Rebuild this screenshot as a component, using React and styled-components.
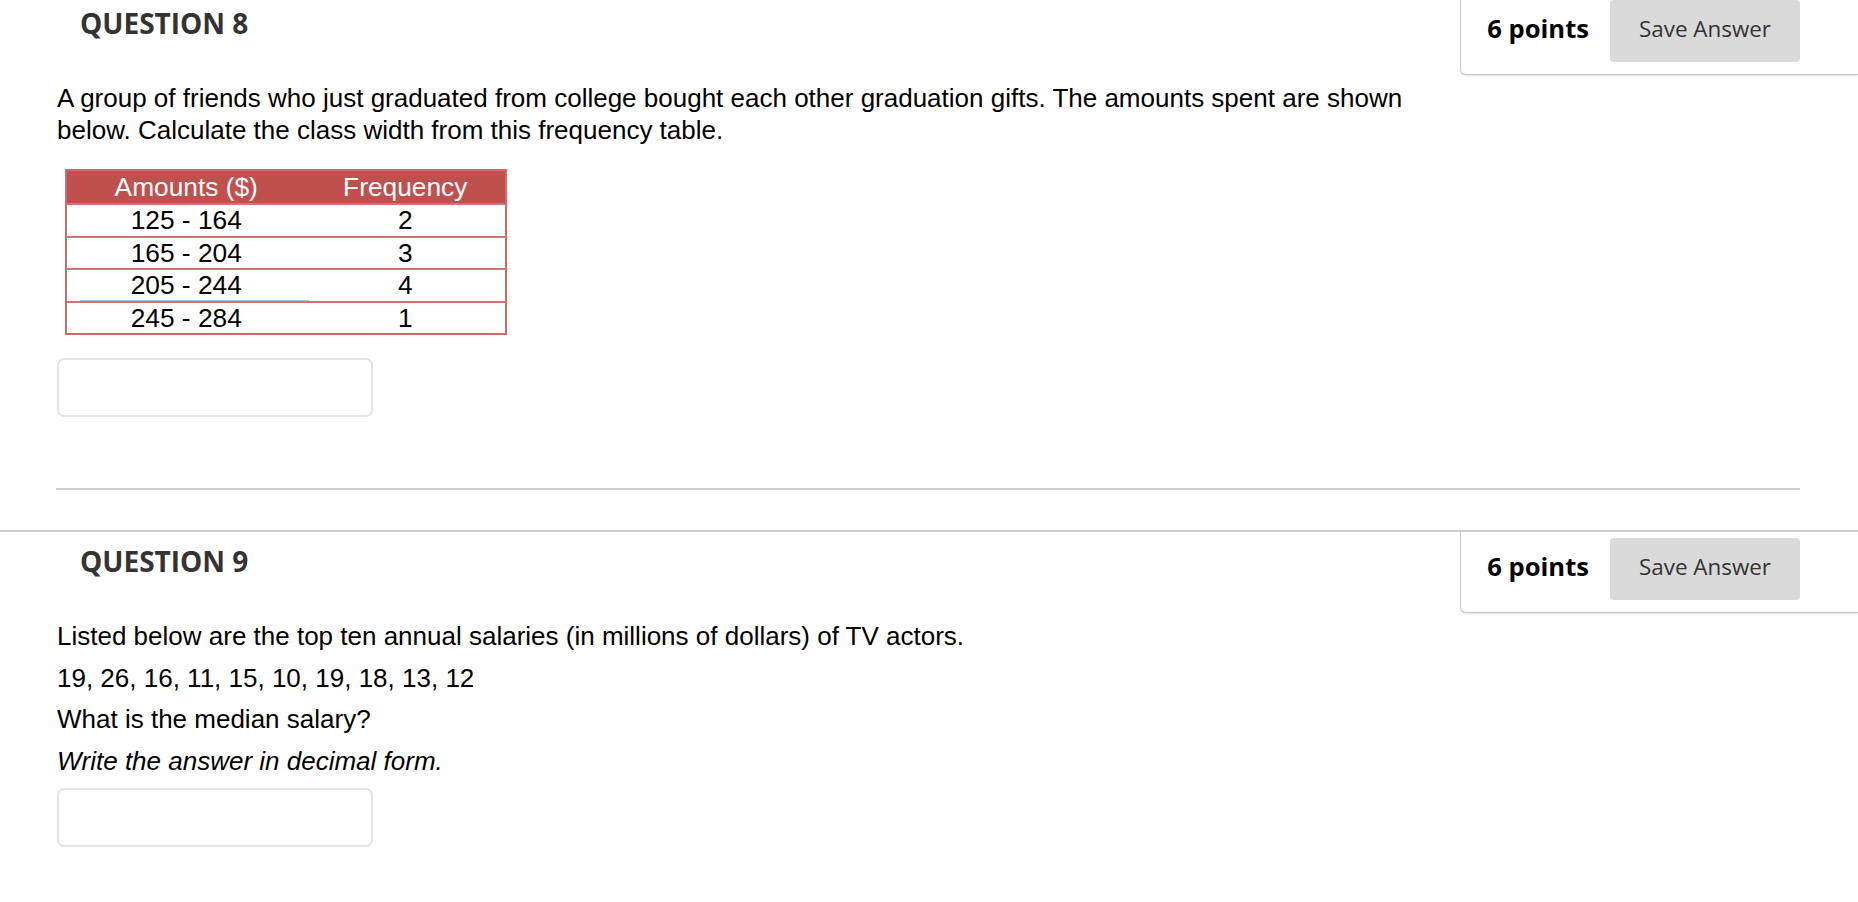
import React from 'react';
import styled, { createGlobalStyle } from 'styled-components';

const GlobalStyle = createGlobalStyle`
  body {
    margin: 0;
    background: #fff;
  }
`;

const Page = styled.div`
  margin-top: -8px;
  font-family: 'Liberation Sans', Arial, Helvetica, sans-serif;
  color: #000;
`;

const Question = styled.section`
  border-top: 2px solid #cdcdcd;
  padding-bottom: 40px;
`;

const Header = styled.div`
  display: flex;
  justify-content: space-between;
  align-items: flex-start;
`;

const Title = styled.h3`
  margin: 10px 0 0 80px;
  font-family: 'Open Sans', sans-serif;
  font-weight: 700;
  font-size: 28px;
  line-height: normal;
  color: #333;
`;

const PointsBox = styled.div`
  display: flex;
  align-items: center;
  gap: 21px;
  padding: 6px 58px 12px 26px;
  background: #fff;
  border-left: 1px solid #cfcfcf;
  border-bottom: 1px solid #c6c6c6;
  border-bottom-left-radius: 6px;
  box-shadow: 0 1px 2px rgba(0, 0, 0, 0.12);
`;

const Points = styled.span`
  margin-bottom: 6px;
  font-family: 'Open Sans', sans-serif;
  font-weight: 700;
  font-size: 25.6px;
  color: #000;
`;

const SaveButton = styled.button`
  width: 190px;
  height: 62px;
  padding: 0 0 5px;
  border: none;
  border-radius: 4px;
  background: #dadada;
  color: #333;
  font-family: 'Open Sans', sans-serif;
  font-size: 22.4px;
  cursor: pointer;
`;

const Body = styled.div`
  padding: 7px 58px 0 57px;
`;

const Prompt = styled.p`
  margin: 0 0 ${(p) => (p.$spaced ? '9.5px' : '0')};
  max-width: 1400px;
  font-size: 26px;
  line-height: 32px;
  font-style: ${(p) => (p.$italic ? 'italic' : 'normal')};
`;

const FreqTable = styled.table`
  margin: 23px 0 0 8px;
  width: 442px;
  border-collapse: separate;
  border-spacing: 0;
  border: 2px solid #cc6b68;
  font-family: 'Liberation Sans', Arial, sans-serif;
  font-size: 26.3px;
`;

const HeadCell = styled.th`
  height: 32px;
  padding: 0;
  background: #c0504d;
  color: #fff;
  font-weight: 400;
  text-align: center;
  width: ${(p) => p.$w}px;
`;

const Cell = styled.td`
  position: relative;
  height: 30.5px;
  padding: 0;
  border-top: 2px solid #d07471;
  text-align: center;
  line-height: 1;

  &::after {
    content: '';
    display: ${(p) => (p.$mark ? 'block' : 'none')};
    position: absolute;
    left: 13px;
    bottom: 0;
    width: 229px;
    height: 1px;
    background: #adc3e3;
  }
`;

const AnswerBox = styled.input`
  display: block;
  box-sizing: border-box;
  width: 316px;
  height: 59px;
  margin-top: ${(p) => p.$top}px;
  border: 2px solid #e4e4e4;
  border-radius: 7px;
  background: #fff;
  outline: none;
`;

const Divider = styled.div`
  height: 2px;
  margin: 71px 58px 0 56px;
  background: #cdcdcd;
`;

const rows = [
  ['125 - 164', '2'],
  ['165 - 204', '3'],
  ['205 - 244', '4'],
  ['245 - 284', '1'],
];

const QuestionHeader = ({ number }) => (
  <Header>
    <Title>QUESTION {number}</Title>
    <PointsBox>
      <Points>6 points</Points>
      <SaveButton>Save Answer</SaveButton>
    </PointsBox>
  </Header>
);

const App = () => {
  return (
    <Page>
      <GlobalStyle />
      <Question>
        <QuestionHeader number={8} />
        <Body>
          <Prompt>
            A group of friends who just graduated from college bought each other graduation gifts. The amounts spent are
            shown below. Calculate the class width from this frequency table.
          </Prompt>
          <FreqTable>
            <thead>
              <tr>
                <HeadCell $w={241}>Amounts ($)</HeadCell>
                <HeadCell $w={201}>Frequency</HeadCell>
              </tr>
            </thead>
            <tbody>
              {rows.map(([range, freq], i) => (
                <tr key={range}>
                  <Cell $mark={i === 2}>{range}</Cell>
                  <Cell>{freq}</Cell>
                </tr>
              ))}
            </tbody>
          </FreqTable>
          <AnswerBox type="text" $top={23} />
        </Body>
        <Divider />
      </Question>
      <Question>
        <QuestionHeader number={9} />
        <Body>
          <Prompt $spaced>Listed below are the top ten annual salaries (in millions of dollars) of TV actors.</Prompt>
          <Prompt $spaced>19, 26, 16, 11, 15, 10, 19, 18, 13, 12</Prompt>
          <Prompt $spaced>What is the median salary?</Prompt>
          <Prompt $italic>Write the answer in decimal form.</Prompt>
          <AnswerBox type="text" $top={11.5} />
        </Body>
        <Divider />
      </Question>
    </Page>
  );
};

export default App;
